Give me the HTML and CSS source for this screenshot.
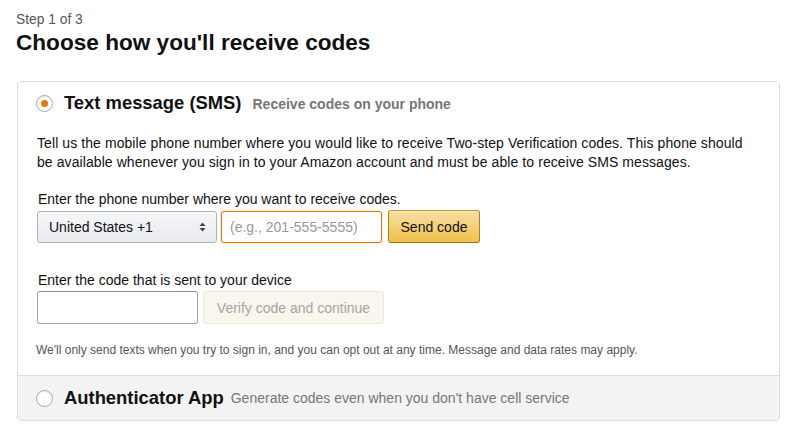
FILE: index.html
```html
<!DOCTYPE html>
<html lang="en">
<head>
<meta charset="utf-8">
<title>Two-step Verification</title>
<link rel="stylesheet" href="styles.css">
</head>
<body>
<div class="page">
  <div class="step">Step 1 of 3</div>
  <h1 class="heading">Choose how you'll receive codes</h1>
  <div class="box">
    <div class="option option-active">
      <div class="option-head">
        <span class="radio radio-on"><span class="radio-dot"></span></span>
        <span class="option-title">Text message (SMS)</span>
        <span class="option-sub option-sub-bold">Receive codes on your phone</span>
      </div>
      <p class="desc">Tell us the mobile phone number where you would like to receive Two-step Verification codes. This phone should be available whenever you sign in to your Amazon account and must be able to receive SMS messages.</p>
      <div class="form">
        <div class="label">Enter the phone number where you want to receive codes.</div>
        <div class="row">
          <div class="select">
            <span>United States +1</span>
            <svg class="arrows" width="7" height="10" viewBox="0 0 7 10"><path d="M3.5 0.5 L6.5 4 L0.5 4 Z M3.5 9.5 L6.5 6 L0.5 6 Z" fill="#444"/></svg>
          </div>
          <input class="input input-focus" type="text" placeholder="(e.g., 201-555-5555)">
          <button class="btn btn-primary" type="button">Send code</button>
        </div>
        <div class="label label-second">Enter the code that is sent to your device</div>
        <div class="row">
          <input class="input input-code" type="text">
          <button class="btn btn-disabled" type="button">Verify code and continue</button>
        </div>
      </div>
      <p class="fine">We'll only send texts when you try to sign in, and you can opt out at any time. Message and data rates may apply.</p>
    </div>
    <div class="option option-inactive">
      <div class="option-head">
        <span class="radio"></span>
        <span class="option-title">Authenticator App</span>
        <span class="option-sub">Generate codes even when you don't have cell service</span>
      </div>
    </div>
  </div>
</div>
</body>
</html>
```
FILE: styles.css
```css
* { box-sizing: border-box; }
html, body { margin: 0; padding: 0; background: #fff; }
body { font-family: "Liberation Sans", Arial, sans-serif; color: #111; }
.page { padding: 12px 20px 0 16px; }
.step { font-size: 13.8px; line-height: 16px; color: #555; }
.heading { margin: 3px 0 0; font-size: 22.6px; line-height: 24px; font-weight: bold; color: #111; }
.box { margin: 26px 0 0 1px; width: 763px; border: 1px solid #ddd; border-radius: 4px; overflow: hidden; }
.option { padding: 0 18px; }
.option-active { background: #fff; padding-top: 10px; padding-bottom: 17px; }
.option-inactive { background: #f3f3f3; border-top: 1px solid #ddd; height: 45px; display: flex; align-items: center; }
.option-head { display: flex; align-items: center; height: 22px; }
.radio { width: 17px; height: 17px; border: 1px solid #a6a6a6; border-radius: 50%; background: #fff; display: flex; align-items: center; justify-content: center; margin-right: 11px; flex: none; box-shadow: inset 0 1px 1px rgba(0,0,0,0.08); }
.radio-dot { width: 7px; height: 7px; border-radius: 50%; background: #e77600; }
.option-title { font-size: 18.4px; font-weight: bold; color: #111; margin-right: 7px; }
.option-sub { font-size: 14px; color: #767676; }
.option-sub-bold { font-size: 14px; font-weight: bold; position: relative; top: 1px; margin-left: 4px; }
.desc { margin: 20px 0 0 1px; font-size: 14px; line-height: 19px; letter-spacing: 0.08px; color: #111; }
.form { padding-left: 1px; }
.label { margin-top: 19px; font-size: 14px; line-height: 16px; color: #111; padding-left: 1px; }
.label-second { margin-top: 29px; }
.row { display: flex; align-items: center; margin-top: 3px; }
.select { width: 180px; height: 32px; border: 1px solid #adb1b8; border-radius: 3px; background: linear-gradient(#f7f8fa, #e7e9ec); display: flex; align-items: center; justify-content: space-between; padding: 0 10px 0 11px; font-size: 14px; color: #111; box-shadow: 0 1px 0 rgba(255,255,255,0.6) inset; }
.arrows { display: block; }
.input { height: 32px; border: 1px solid #a6a6a6; border-top-color: #949494; border-radius: 3px; padding: 0 8px; font-family: "Liberation Sans", Arial, sans-serif; font-size: 14px; color: #111; background: #fff; outline: none; }
.input::placeholder { color: #999; }
.input-focus { width: 161px; margin-left: 4px; border-color: #e77600; box-shadow: 0 0 2px rgba(228,121,17,0.5); }
.input-code { width: 161px; height: 33px; }
.btn { height: 33px; border-radius: 3px; font-family: "Liberation Sans", Arial, sans-serif; font-size: 14px; padding: 0; cursor: default; }
.btn-primary { margin-left: 6px; width: 92px; border: 1px solid #a88734; border-color: #c89411 #b0820f #99710d; background: linear-gradient(#f7dfa5, #f0c14b); color: #111; box-shadow: 0 1px 0 rgba(255,255,255,0.4) inset; }
.btn-disabled { margin-left: 5px; width: 181px; border: 1px solid #efe9d6; background: #f9f6ec; color: #a5a5a5; }
.fine { margin: 19px 0 0; font-size: 12px; line-height: 15px; color: #555; }
```
